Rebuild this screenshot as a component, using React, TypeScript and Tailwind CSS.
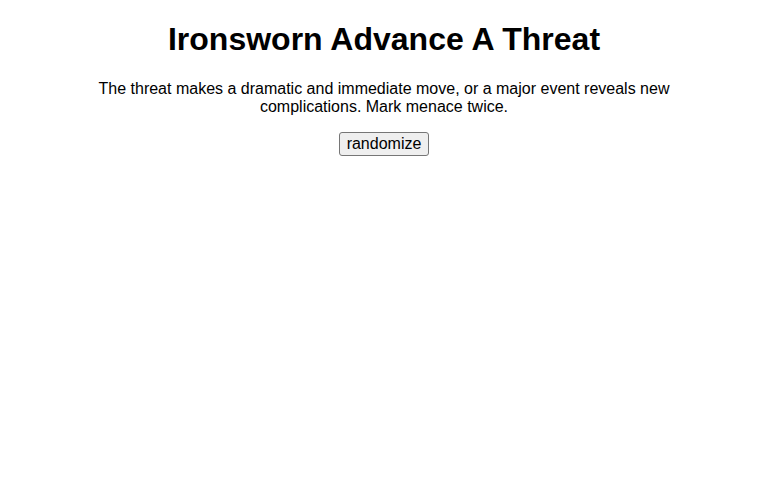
import { useState } from "react";

const results = [
  "The threat makes a dramatic and immediate move, or a major event reveals new complications. Mark menace twice.",
];

const App = () => {
  const [result, setResult] = useState(results[0]);

  const randomize = () => {
    setResult(results[Math.floor(Math.random() * results.length)]);
  };

  return (
    <div className="min-h-screen bg-white text-black text-center font-['Liberation_Sans',Arial,sans-serif]">
      <h1 className="pt-[21.44px] mb-[21.44px] text-[32px] font-bold leading-[normal]">
        Ironsworn Advance A Threat
      </h1>
      <p className="max-w-[600px] mx-auto mb-4 text-base leading-[normal]">{result}</p>
      <button
        onClick={randomize}
        className="px-[7px] py-[2px] text-base leading-[normal] bg-[#efefef] border border-[#767676] rounded-[3px] hover:bg-[#e5e5e5]"
      >
        randomize
      </button>
    </div>
  );
};

export default App;
